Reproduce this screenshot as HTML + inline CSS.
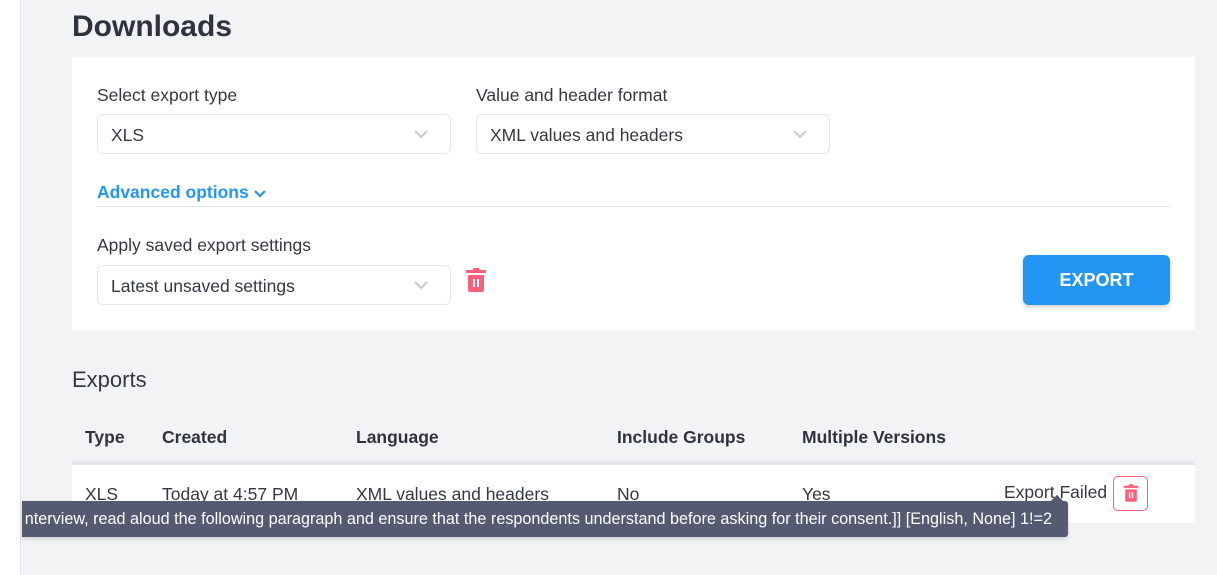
<!DOCTYPE html><html><head><style>
*{box-sizing:border-box;margin:0;padding:0}
body{width:1217px;height:575px;overflow:hidden;background:#f2f3f5;font-family:"Liberation Sans",sans-serif;color:#333844;position:relative}
.abs{position:absolute}
.side{left:0;top:0;width:21px;height:575px;background:#fff;border-right:1px solid #e4e5ea}
h1{position:absolute;left:72px;top:10px;font-size:30px;font-weight:bold;color:#2f3340}
.card{left:72px;top:57px;width:1123px;height:273px;background:#fff}
.lbl{font-size:17.5px;color:#333844}
.sel{height:40px;border:1px solid #e6e7ec;border-radius:6px;background:#fff;font-size:17.5px;padding:10px 13px;color:#333844}
.sel svg{position:absolute;right:22px;top:15px}
.th{font-size:17.5px;font-weight:bold;top:427px;color:#2f3340}
.td{font-size:17.5px;top:484px;color:#333844}
</style></head><body>
<div class="abs side"></div>
<h1>Downloads</h1>
<div class="abs card"></div>
<div class="abs lbl" style="left:97px;top:85px">Select export type</div>
<div class="abs sel" style="left:97px;top:114px;width:354px">XLS<svg width="14" height="9" viewBox="0 0 14 9"><path d="M1 1l6 6 6-6" stroke="#c9cad0" stroke-width="2" fill="none"/></svg></div>
<div class="abs lbl" style="left:476px;top:85px">Value and header format</div>
<div class="abs sel" style="left:476px;top:114px;width:354px">XML values and headers<svg width="14" height="9" viewBox="0 0 14 9"><path d="M1 1l6 6 6-6" stroke="#c9cad0" stroke-width="2" fill="none"/></svg></div>
<div class="abs" style="left:97px;top:182px;font-size:17.5px;font-weight:bold;color:#2196f3">Advanced options <svg width="12" height="8" viewBox="0 0 12 8"><path d="M1 1l5 5 5-5" stroke="#2196f3" stroke-width="2.2" fill="none"/></svg></div>
<div class="abs" style="left:97px;top:206px;width:1073px;height:1px;background:#e6e7ec"></div>
<div class="abs lbl" style="left:97px;top:235px">Apply saved export settings</div>
<div class="abs sel" style="left:97px;top:265px;width:354px">Latest unsaved settings<svg width="14" height="9" viewBox="0 0 14 9"><path d="M1 1l6 6 6-6" stroke="#c9cad0" stroke-width="2" fill="none"/></svg></div>
<svg class="abs" style="left:465px;top:267px" width="22" height="26" viewBox="0 0 22 26"><rect x="1" y="3" width="20" height="3" fill="#ff5f7a"/><rect x="8" y="1" width="6" height="3" fill="#ff5f7a"/><path d="M3 8h16v15a2 2 0 0 1-2 2H5a2 2 0 0 1-2-2z" fill="#ff5f7a"/><rect x="8" y="12" width="2" height="8" fill="#fff"/><rect x="12" y="12" width="2" height="8" fill="#fff"/></svg>
<div class="abs" style="left:1023px;top:255px;width:147px;height:50px;background:#2196f3;border-radius:6px;box-shadow:0 2px 4px rgba(0,0,0,.2);color:#fff;font-weight:bold;font-size:18px;text-align:center;line-height:50px">EXPORT</div>
<div class="abs" style="left:72px;top:367px;font-size:22px;color:#333844">Exports</div>
<div class="abs th" style="left:85px">Type</div>
<div class="abs th" style="left:162px">Created</div>
<div class="abs th" style="left:356px">Language</div>
<div class="abs th" style="left:617px">Include Groups</div>
<div class="abs th" style="left:802px">Multiple Versions</div>
<div class="abs" style="left:72px;top:461px;width:1123px;height:4px;background:#e6e7ec"></div>
<div class="abs" style="left:72px;top:465px;width:1123px;height:58px;background:#fff"></div>
<div class="abs td" style="left:85px">XLS</div>
<div class="abs td" style="left:162px">Today at 4:57 PM</div>
<div class="abs td" style="left:356px">XML values and headers</div>
<div class="abs td" style="left:617px">No</div>
<div class="abs td" style="left:802px">Yes</div>
<div class="abs td" style="left:1004px;top:482px">Export Failed</div>
<div class="abs" style="left:1113px;top:476px;width:35px;height:35px;border:1px solid #ff5f7a;border-radius:5px"></div>
<svg class="abs" style="left:1123px;top:483px" width="16" height="20" viewBox="0 0 22 26"><rect x="1" y="3" width="20" height="3" fill="#ff5f7a"/><rect x="8" y="1" width="6" height="3" fill="#ff5f7a"/><path d="M3 8h16v15a2 2 0 0 1-2 2H5a2 2 0 0 1-2-2z" fill="#ff5f7a"/><rect x="8" y="12" width="2" height="8" fill="#fff"/><rect x="12" y="12" width="2" height="8" fill="#fff"/></svg>
<div class="abs" style="left:1052px;top:497px;width:10px;height:10px;background:#535a72;transform:rotate(45deg)"></div>
<div class="abs" style="left:22px;top:501px;width:1046px;height:36px;background:#535a72;border-radius:0 3px 3px 0;color:#fff;font-size:16.2px;line-height:36px;white-space:nowrap;overflow:hidden;text-align:right;padding-right:16px;box-shadow:0 2px 4px rgba(0,0,0,.15)">nterview, read aloud the following paragraph and ensure that the respondents understand before asking for their consent.]] [English, None] 1!=2</div>
</body></html>
